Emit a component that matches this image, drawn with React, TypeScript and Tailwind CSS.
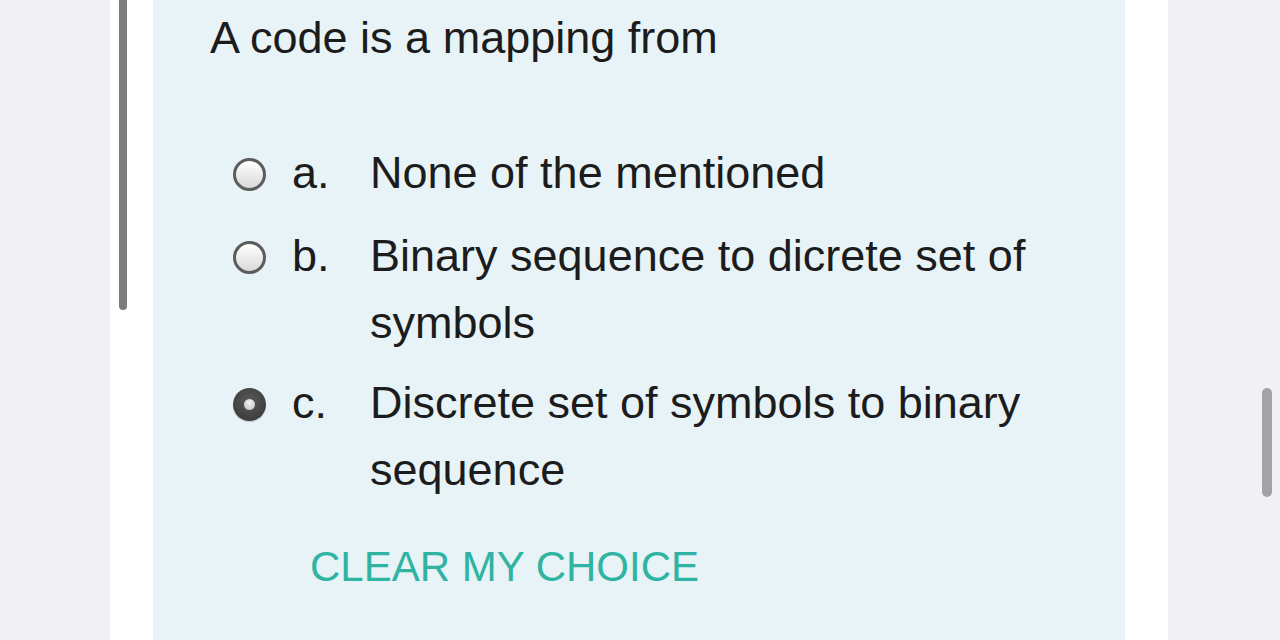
const options = [
  { key: "a.", lines: ["None of the mentioned"], checked: false, mt: "mt-0" },
  { key: "b.", lines: ["Binary sequence to dicrete set of", "symbols"], checked: false, mt: "mt-[16px]" },
  { key: "c.", lines: ["Discrete set of symbols to binary", "sequence"], checked: true, mt: "mt-[13px]" },
];

const Radio = ({ checked }: { checked: boolean }) =>
  checked ? (
    <span className="flex h-[33px] w-[33px] items-center justify-center rounded-full bg-[radial-gradient(circle_at_50%_40%,#5a5a5a,#333)] shadow-[0_1px_1px_rgba(0,0,0,0.2)]">
      <span className="h-[11px] w-[11px] rounded-full bg-[radial-gradient(circle_at_50%_35%,#f4f4f4,#bdbdbd)]" />
    </span>
  ) : (
    <span className="block h-[33px] w-[33px] rounded-full border-[3px] border-[#5c5c5c] bg-[linear-gradient(180deg,#ffffff,#d9d9d9)]" />
  );

export default function App() {
  return (
    <div
      className="relative flex h-[640px] w-[1280px] overflow-hidden bg-[#f0f0f5] text-[#1c1c1c]"
      style={{ fontFamily: '"Liberation Sans", Arial, sans-serif' }}
    >
      <div className="w-[110px] shrink-0" />
      <div className="w-[1058px] shrink-0 bg-white px-[43px]">
        <div className="h-full bg-[#e7f3f6] pl-[57px] pt-[4px]">
          <p className="text-[45px] leading-[67px]">A code is a mapping from</p>

          <ul className="mt-[68px]">
            {options.map((o) => (
              <li key={o.key} className={`flex ${o.mt}`}>
                <div className="flex h-[67px] w-[82px] shrink-0 items-center pl-[23px] pt-[4px]">
                  <Radio checked={o.checked} />
                </div>
                <span className="w-[78px] shrink-0 text-[45px] leading-[67px]">{o.key}</span>
                <div className="text-[45px] leading-[67px]">
                  {o.lines.map((l) => (
                    <div key={l}>{l}</div>
                  ))}
                </div>
              </li>
            ))}
          </ul>

          <button className="mt-[39px] ml-[100px] text-[42px] leading-[50px] text-[#2fb3a3]">
            CLEAR MY CHOICE
          </button>
        </div>
      </div>
      <div className="flex-1" />

      <div className="absolute left-[119px] top-0 h-[310px] w-[8px] rounded-b-full bg-[#7c7c7c]" />
      <div className="absolute left-[1262px] top-[388px] h-[109px] w-[10px] rounded-full bg-[#a3a3a6]" />
    </div>
  );
}
